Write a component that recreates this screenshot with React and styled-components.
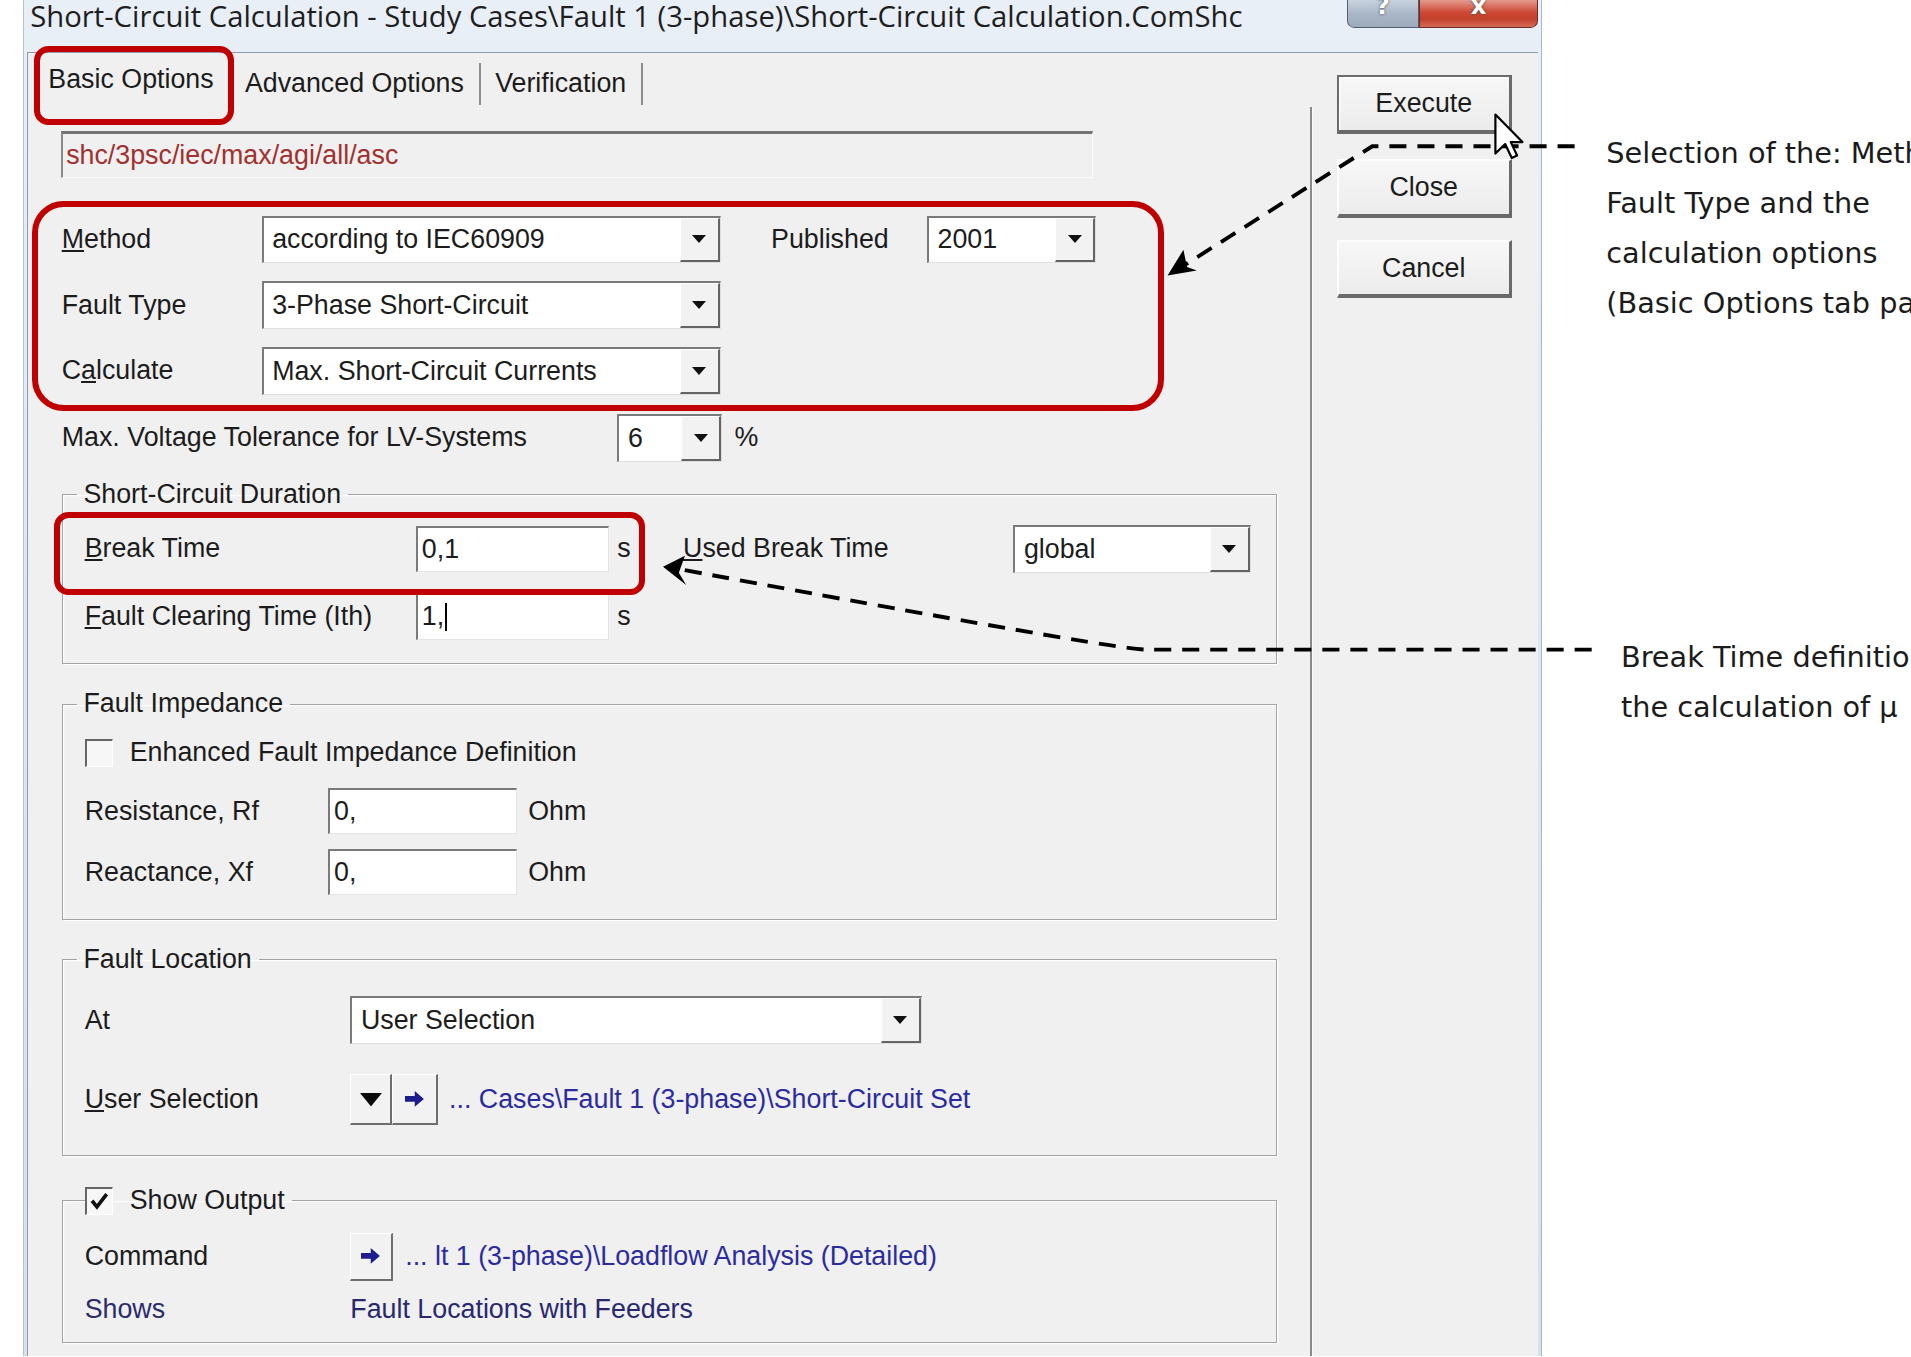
import React from 'react';
import styled, { createGlobalStyle } from 'styled-components';

const GlobalStyle = createGlobalStyle`
  html, body {
    margin: 0;
    padding: 0;
    background: #ffffff;
  }
  body {
    overflow: hidden;
  }
`;

// the screenshot is drawn at 1568x1113 and zoomed up to the 1911px window
const Page = styled.div`
  position: relative;
  width: 1568px;
  height: 1113px;
  zoom: 1.21875;
  overflow: hidden;
  display: flex;
  padding-left: 19px;
  box-sizing: border-box;
  background: #fff;
  font-family: "Liberation Sans", Arial, sans-serif;
  font-size: 22px;
  color: #1c1c1c;
`;

const Window = styled.div`
  width: 1246px;
  flex-shrink: 0;
  display: flex;
  flex-direction: column;
  padding: 0 2px;
  box-sizing: border-box;
  background: linear-gradient(180deg, #e9eff6 0%, #dbe5f0 60%, #d6e1ee 100%);
  border-left: 1px solid #b4c3d4;
  border-right: 1px solid #9fbadb;
`;

const TitleBar = styled.div`
  height: 43px;
  display: flex;
  align-items: flex-start;
  padding-left: 3px;
`;

const TitleText = styled.div`
  flex: 1;
  padding-top: 1px;
  font-family: "Open Sans", "Liberation Sans", sans-serif;
  font-size: 24px;
  line-height: 25px;
  color: #1e1e1e;
  white-space: nowrap;
`;

const CaptionButtons = styled.div`
  display: flex;
  flex-shrink: 0;
`;

const CaptionBtn = styled.div`
  width: ${p => p.$w}px;
  height: 23px;
  box-sizing: border-box;
  overflow: hidden;
  display: flex;
  justify-content: center;
  border: 1px solid ${p => (p.$close ? '#6d2b23' : '#4f5e72')};
  border-top: none;
  border-radius: ${p => (p.$close ? '0 0 6px 0' : '0 0 0 6px')};
  background: ${p =>
    p.$close
      ? 'linear-gradient(180deg, #e39a8e 0%, #cf4a36 45%, #c2402d 70%, #d66a55 100%)'
      : 'linear-gradient(180deg, #c9d3df 0%, #aab7c8 50%, #9dabbd 100%)'};
  color: #fff;
  font-family: "DejaVu Sans", sans-serif;
  font-weight: bold;
  font-size: 20px;
  line-height: 20px;
  text-shadow: 0 0 2px #333;

  span {
    margin-top: -5px;
  }
`;

const Client = styled.div`
  flex: 1;
  display: flex;
  background: #f0f0f0;
  border-top: 1px solid #8c9bad;
  border-left: 1px solid #8c9bad;
  min-height: 0;
`;

const MainArea = styled.div`
  width: 1054px;
  flex-shrink: 0;
  display: flex;
  flex-direction: column;
`;

const TabStrip = styled.div`
  height: 44px;
  display: flex;
  align-items: flex-start;
  padding-left: 5px;
  box-sizing: border-box;
`;

const Tab = styled.div`
  position: relative;
  margin-top: 8px;
  height: 34px;
  box-sizing: border-box;
  padding: ${p => (p.$active ? '1px 12px 0' : '4px 12px 0')};
  line-height: 26px;
  white-space: nowrap;
  border-right: 2px solid ${p => (p.$active ? 'transparent' : '#8d8d8d')};
`;

const Marked = styled.div`
  position: relative;
  display: ${p => (p.$inline ? 'flex' : 'block')};
  align-items: center;
  height: ${p => (p.$inline ? '100%' : 'auto')};

  &::after {
    content: '';
    position: absolute;
    top: ${p => p.$t}px;
    right: ${p => p.$r}px;
    bottom: ${p => p.$b}px;
    left: ${p => p.$l}px;
    border: 5px solid #c00000;
    border-radius: ${p => p.$rad}px;
    pointer-events: none;
    z-index: 2;
  }
`;

const TabPage = styled.div`
  flex: 1;
  padding: 0 27px 0 28px;
  border-right: 2px solid #8a8a8a;
  box-shadow: 1px 0 0 #fafafa;
`;

const CommandField = styled.div`
  width: 847px;
  height: 38px;
  margin: 20px 0 0 -1px;
  box-sizing: border-box;
  border-top: 3px solid #747474;
  border-left: 2px solid #8a8a8a;
  border-right: 1px solid #fbfbfb;
  border-bottom: 1px solid #fbfbfb;
  padding-left: 3px;
  display: flex;
  align-items: center;
  color: #a1302f;
  white-space: nowrap;
`;

const Rows = styled.div`
  display: flex;
  flex-direction: column;
  gap: ${p => p.$gap}px;
`;

const Row = styled.div`
  display: flex;
  align-items: center;
  height: ${p => p.$h || 39}px;
  margin-top: ${p => p.$mt || 0}px;
`;

const Label = styled.div`
  width: ${p => p.$w}px;
  margin-left: ${p => p.$ml || 0}px;
  flex-shrink: 0;
  white-space: nowrap;
  color: ${p => p.$color || 'inherit'};
`;

const Unit = styled.div`
  margin-left: ${p => p.$ml || 7}px;
  white-space: nowrap;
`;

const ComboBox = styled.div`
  width: ${p => p.$w}px;
  height: 39px;
  flex-shrink: 0;
  box-sizing: border-box;
  display: flex;
  background: #fff;
  border-top: 2px solid #7a7a7a;
  border-left: 2px solid #7a7a7a;
  border-right: 1px solid #dedede;
  border-bottom: 1px solid #dedede;
`;

const ComboText = styled.div`
  flex: 1;
  display: flex;
  align-items: center;
  padding-left: 7px;
  white-space: nowrap;
  overflow: hidden;
`;

const ComboBtn = styled.div`
  width: 33px;
  box-sizing: border-box;
  display: flex;
  align-items: center;
  justify-content: center;
  background: #f2f2f2;
  border-top: 1px solid #fff;
  border-left: 1px solid #fff;
  border-right: 2px solid #646464;
  border-bottom: 2px solid #646464;

  &::after {
    content: '';
    border-left: 6px solid transparent;
    border-right: 6px solid transparent;
    border-top: 7px solid #111;
  }
`;

const TextBox = styled.div`
  width: ${p => p.$w}px;
  height: 38px;
  flex-shrink: 0;
  box-sizing: border-box;
  display: flex;
  align-items: center;
  padding-left: 3px;
  background: #fff;
  border-top: 2px solid #7a7a7a;
  border-left: 2px solid #7a7a7a;
  border-right: 1px solid #e4e4e4;
  border-bottom: 1px solid #e4e4e4;
  white-space: nowrap;
`;

const Caret = styled.span`
  display: inline-block;
  width: 1px;
  height: 23px;
  margin-left: 1px;
  background: #000;
`;

const Group = styled.fieldset`
  width: 997px;
  min-width: 0;
  box-sizing: border-box;
  margin: ${p => p.$mt}px 0 0 0;
  padding: 0 0 ${p => p.$pb}px 18px;
  border: 1px solid #a4a4a4;
  box-shadow: inset 1px 1px 0 #fdfdfd, 1px 1px 0 #fdfdfd;
`;

const Legend = styled.legend`
  margin-left: ${p => (p.$check ? 0 : -6)}px;
  padding: ${p => (p.$check ? '0 6px 0 0' : '0 6px 0 5px')};
  line-height: 26px;
  display: flex;
  align-items: center;
  gap: 14px;
  white-space: nowrap;
`;

const CheckBox = styled.div`
  width: 23px;
  height: 23px;
  flex-shrink: 0;
  box-sizing: border-box;
  display: flex;
  align-items: center;
  justify-content: center;
  background: #f7f7f7;
  border-top: 2px solid #666;
  border-left: 2px solid #666;
  border-right: 1px solid #fff;
  border-bottom: 1px solid #fff;
`;

const CheckRow = styled(Row)`
  gap: 14px;
`;

const SmallBtn = styled.div`
  width: ${p => p.$w}px;
  height: ${p => p.$h}px;
  flex-shrink: 0;
  box-sizing: border-box;
  display: flex;
  align-items: center;
  justify-content: center;
  background: #f2f2f2;
  border-top: 1px solid #fff;
  border-left: 1px solid #fff;
  border-right: 2px solid #6e6e6e;
  border-bottom: 2px solid #6e6e6e;
`;

const LinkText = styled.div`
  margin-left: ${p => p.$ml}px;
  color: #2b2ba0;
  white-space: nowrap;
`;

const NavyText = styled.div`
  color: #28286e;
  white-space: nowrap;
`;

const ButtonColumn = styled.div`
  flex: 1;
  display: flex;
  flex-direction: column;
  align-items: flex-start;
  padding: 18px 0 0 20px;
`;

const PushButton = styled.div`
  width: 144px;
  height: 48px;
  margin-top: ${p => p.$mt || 0}px;
  box-sizing: border-box;
  display: flex;
  align-items: center;
  justify-content: center;
  background: linear-gradient(180deg, #f7f7f7 0%, #ececec 100%);
  border-top: 2px solid ${p => (p.$default ? '#6c6c6c' : '#fdfdfd')};
  border-left: 2px solid ${p => (p.$default ? '#6c6c6c' : '#fdfdfd')};
  border-right: 3px solid #6a6a6a;
  border-bottom: 4px solid #6a6a6a;
  box-shadow: ${p => (p.$default ? 'inset 1px 1px 0 #fff' : 'none')};
`;

const Notes = styled.div`
  flex: 1;
  padding-top: 106px;
  font-family: "DejaVu Sans", sans-serif;
  font-size: 23.6px;
  line-height: 41px;
  color: #1b1b1b;
  white-space: nowrap;
`;

const NoteBlock = styled.div`
  padding-left: ${p => p.$pl}px;
  margin-top: ${p => p.$mt || 0}px;
`;

const Overlay = styled.svg`
  position: absolute;
  left: 0;
  top: 0;
  pointer-events: none;
  z-index: 5;
`;

const Combo = ({ width, children }) => (
  <ComboBox $w={width}>
    <ComboText>{children}</ComboText>
    <ComboBtn />
  </ComboBox>
);

const BlueArrow = () => (
  <svg width="16" height="13" viewBox="0 0 16 13">
    <path d="M0 4.2 H8 V0 L15.5 6.5 L8 13 V8.8 H0 Z" fill="#1c1c8c" />
  </svg>
);

const DownTriangle = () => (
  <svg width="18" height="11" viewBox="0 0 18 11">
    <polygon points="0,0 18,0 9,11" fill="#0a0a0a" />
  </svg>
);

const Check = () => (
  <svg width="17" height="17" viewBox="0 0 17 17">
    <polyline points="2.5,8 6.5,13 14.5,2.5" fill="none" stroke="#111" strokeWidth="3" />
  </svg>
);

const App = () => {
  return (
    <>
      <GlobalStyle />
      <Page>
        <Window>
          <TitleBar>
            <TitleText>Short-Circuit Calculation - Study Cases\Fault 1 (3-phase)\Short-Circuit Calculation.ComShc</TitleText>
            <CaptionButtons>
              <CaptionBtn $w={59}><span>?</span></CaptionBtn>
              <CaptionBtn $w={98} $close><span>x</span></CaptionBtn>
            </CaptionButtons>
          </TitleBar>

          <Client>
            <MainArea>
              <TabStrip>
                <Tab $active>
                  <Marked $t={-15} $r={-17} $b={-24} $l={-12} $rad={12}>Basic Options</Marked>
                </Tab>
                <Tab>Advanced Options</Tab>
                <Tab>Verification</Tab>
              </TabStrip>

              <TabPage>
                <CommandField>shc/3psc/iec/max/agi/all/asc</CommandField>

                <Marked $t={-12} $r={93} $b={-13} $l={-24} $rad={26} style={{ marginTop: 31 }}>
                  <Rows $gap={15}>
                    <Row>
                      <Label $w={164}><u>M</u>ethod</Label>
                      <Combo width={377}>according to IEC60909</Combo>
                      <Label $w={128} $ml={41}>Published</Label>
                      <Combo width={139}>2001</Combo>
                    </Row>
                    <Row>
                      <Label $w={164}>Fault Type</Label>
                      <Combo width={377}>3-Phase Short-Circuit</Combo>
                    </Row>
                    <Row>
                      <Label $w={164}>C<u>a</u>lculate</Label>
                      <Combo width={377}>Max. Short-Circuit Currents</Combo>
                    </Row>
                  </Rows>
                </Marked>

                <Row $mt={16}>
                  <Label $w={456}>Max. Voltage Tolerance for LV-Systems</Label>
                  <Combo width={86}>6</Combo>
                  <Unit $ml={10}>%</Unit>
                </Row>

                <Group $mt={14} $pb={19}>
                  <Legend>Short-Circuit Duration</Legend>
                  <Row $mt={12}>
                    <Marked $inline $t={-11} $r={-12} $b={-18} $l={-25} $rad={12}>
                      <Label $w={272}><u>B</u>reak Time</Label>
                      <TextBox $w={158}>0,1</TextBox>
                      <Unit>s</Unit>
                    </Marked>
                    <Label $w={271} $ml={43}><u>U</u>sed Break Time</Label>
                    <Combo width={195}>global</Combo>
                  </Row>
                  <Row $mt={17} $h={38}>
                    <Label $w={272}><u>F</u>ault Clearing Time (Ith)</Label>
                    <TextBox $w={158}>1,<Caret /></TextBox>
                    <Unit>s</Unit>
                  </Row>
                </Group>

                <Group $mt={20} $pb={19}>
                  <Legend>Fault Impedance</Legend>
                  <CheckRow $mt={12} $h={30}>
                    <CheckBox />
                    <span>Enhanced Fault Impedance Definition</span>
                  </CheckRow>
                  <Row $mt={14} $h={38}>
                    <Label $w={200}>Resistance, Rf</Label>
                    <TextBox $w={155}>0,</TextBox>
                    <Unit $ml={9}>Ohm</Unit>
                  </Row>
                  <Row $mt={12} $h={38}>
                    <Label $w={200}>Reactance, Xf</Label>
                    <TextBox $w={155}>0,</TextBox>
                    <Unit $ml={9}>Ohm</Unit>
                  </Row>
                </Group>

                <Group $mt={20} $pb={24}>
                  <Legend>Fault Location</Legend>
                  <Row $mt={17}>
                    <Label $w={218}>At</Label>
                    <Combo width={469}>User Selection</Combo>
                  </Row>
                  <Row $mt={25} $h={42}>
                    <Label $w={218}><u>U</u>ser Selection</Label>
                    <SmallBtn $w={34} $h={42}><DownTriangle /></SmallBtn>
                    <SmallBtn $w={38} $h={42}><BlueArrow /></SmallBtn>
                    <LinkText $ml={9}>... Cases\Fault 1 (3-phase)\Short-Circuit Set</LinkText>
                  </Row>
                </Group>

                <Group $mt={24} $pb={14}>
                  <Legend $check>
                    <CheckBox><Check /></CheckBox>
                    <span>Show Output</span>
                  </Legend>
                  <Row $mt={13} $h={40}>
                    <Label $w={218}>Command</Label>
                    <SmallBtn $w={35} $h={40}><BlueArrow /></SmallBtn>
                    <LinkText $ml={10}>... lt 1 (3-phase)\Loadflow Analysis (Detailed)</LinkText>
                  </Row>
                  <Row $mt={10} $h={26}>
                    <Label $w={218} $color="#2c2c6a">Shows</Label>
                    <NavyText>Fault Locations with Feeders</NavyText>
                  </Row>
                </Group>
              </TabPage>
            </MainArea>

            <ButtonColumn>
              <PushButton $default>Execute</PushButton>
              <PushButton $mt={21}>Close</PushButton>
              <PushButton $mt={18}>Cancel</PushButton>
            </ButtonColumn>
          </Client>
        </Window>

        <Notes>
          <NoteBlock $pl={53}>
            <div>Selection of the: Method,</div>
            <div>Fault Type and the</div>
            <div>calculation options</div>
            <div>(Basic Options tab page)</div>
          </NoteBlock>
          <NoteBlock $pl={65} $mt={249}>
            <div>Break Time definition for</div>
            <div>the calculation of μ</div>
          </NoteBlock>
        </Notes>

        <Overlay width="1568" height="1113" viewBox="0 0 1568 1113">
          <g fill="none" stroke="#000" strokeWidth="3.2" strokeDasharray="14 9">
            <path d="M1292 120 L1126 120 L968 220" />
            <path d="M1306 533 L940 533 Q915 533 552 466" />
          </g>
          <polygon points="958,226 982,222 974,219 971,205" fill="#000" />
          <polygon points="544,465 563,480 557,470 562,456" fill="#000" />
          <g transform="translate(1226 93) scale(2)">
            <path
              d="M0.5 0.5 L0.5 16.5 L4.5 12.6 L7.2 18.3 L9.4 17.3 L6.8 11.8 L11.6 11.8 Z"
              fill="#fff"
              stroke="#000"
              strokeWidth="0.9"
              strokeLinejoin="round"
            />
          </g>
        </Overlay>
      </Page>
    </>
  );
};

export default App;
